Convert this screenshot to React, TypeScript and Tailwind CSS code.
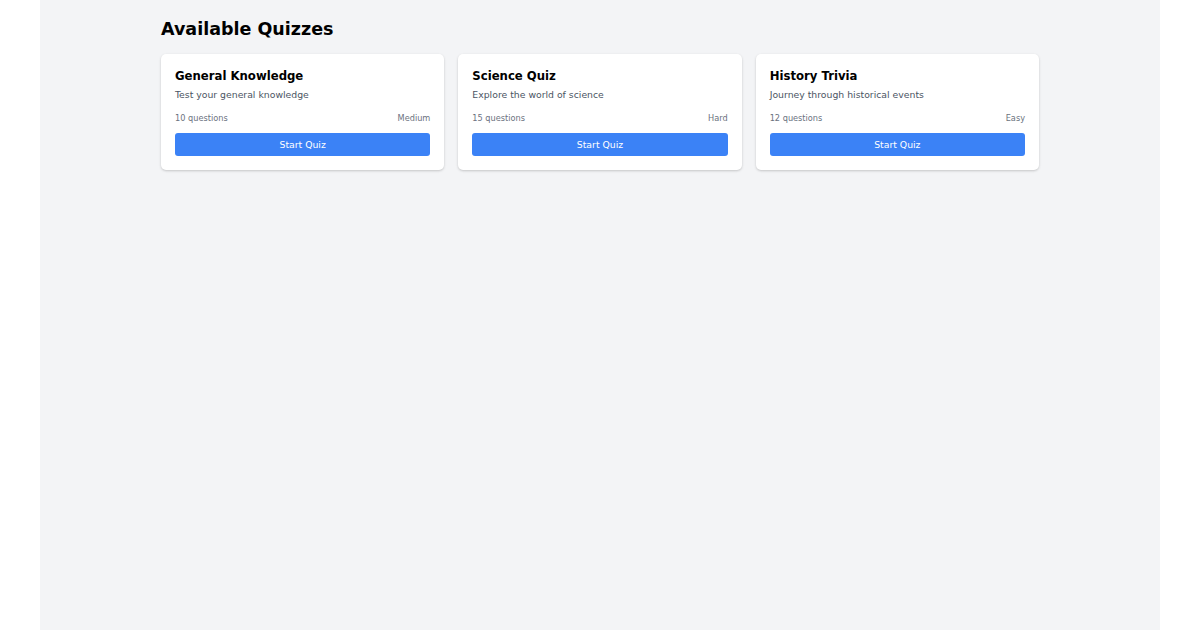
import React from "react";

const quizzes = [
  { title: "General Knowledge", desc: "Test your general knowledge", count: 10, level: "Medium" },
  { title: "Science Quiz", desc: "Explore the world of science", count: 15, level: "Hard" },
  { title: "History Trivia", desc: "Journey through historical events", count: 12, level: "Easy" },
];

export default function App() {
  return (
    <div className="min-h-screen bg-white" style={{ fontFamily: '"DejaVu Sans", sans-serif' }}>
      <div className="mx-auto w-[1120px] min-h-screen bg-[#f3f4f6]">
        <div className="mx-auto w-[878px] pt-[17px]">
          <h1 className="text-[17.5px] leading-[24px] font-bold text-black">Available Quizzes</h1>
          <div className="mt-[13px] grid grid-cols-3 gap-[14px]">
            {quizzes.map((q) => (
              <div key={q.title} className="rounded-[5px] bg-white p-[14px] shadow-[0_1px_3px_rgba(0,0,0,0.12),0_1px_2px_rgba(0,0,0,0.08)]">
                <h2 className="pt-[1px] text-[11.7px] leading-[15px] font-bold text-black">{q.title}</h2>
                <p className="mt-[5px] text-[9.3px] leading-[12px] text-[#4b5563]">{q.desc}</p>
                <div className="mt-[12px] flex justify-between text-[8.2px] leading-[10px] text-[#6b7280]">
                  <span>{q.count} questions</span>
                  <span>{q.level}</span>
                </div>
                <button className="mt-[10px] flex h-[23px] w-full items-center justify-center rounded-[3px] bg-[#3b82f6] text-[9.3px] text-white">
                  Start Quiz
                </button>
              </div>
            ))}
          </div>
        </div>
      </div>
    </div>
  );
}
